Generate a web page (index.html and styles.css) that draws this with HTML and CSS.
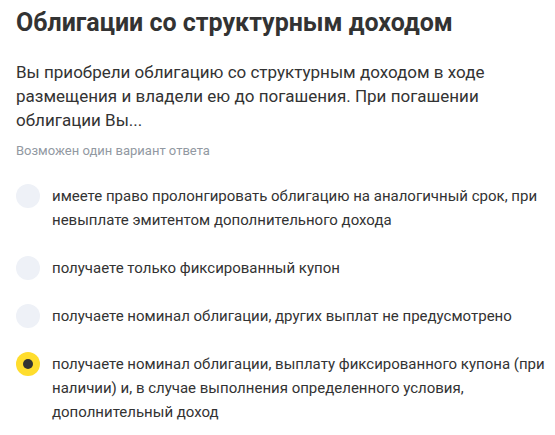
FILE: index.html
```html
<!DOCTYPE html>
<html lang="ru">
<head>
    <meta charset="UTF-8">
    <meta name="viewport" content="width=device-width, initial-scale=1.0">
    <title>Облигации со структурным доходом</title>
    <link rel="stylesheet" href="styles.css">
</head>
<body>
    <h1 class="title">Облигации со структурным доходом</h1>
    <p class="question">Вы приобрели облигацию со структурным доходом в ходе размещения и владели ею до погашения. При погашении облигации Вы...</p>
    <div class="hint">Возможен один вариант ответа</div>

    <div class="options">
        <label class="option">
            <span class="radio"></span>
            <span class="option-text">имеете право пролонгировать облигацию на аналогичный срок, при невыплате эмитентом дополнительного дохода</span>
        </label>
        <label class="option">
            <span class="radio"></span>
            <span class="option-text">получаете только фиксированный купон</span>
        </label>
        <label class="option">
            <span class="radio"></span>
            <span class="option-text">получаете номинал облигации, других выплат не предусмотрено</span>
        </label>
        <label class="option checked">
            <span class="radio"></span>
            <span class="option-text">получаете номинал облигации, выплату фиксированного купона (при наличии) и, в случае выполнения определенного условия, дополнительный доход</span>
        </label>
    </div>
</body>
</html>
```

FILE: styles.css
```css
body { margin: 0; padding: 0 2px 0 16px; font-family: Roboto, "Noto Sans", sans-serif; color: #333; background: #fff; }
.title { margin: 5px 0 0; font-size: 25px; line-height: 36px; font-weight: 700; }
.question { margin: 19px 0 0; padding-right: 10px; font-size: 17px; line-height: 24px; }
.hint { margin-top: 11px; font-size: 13px; line-height: 16px; color: #9299a2; }
.options { margin-top: 25px; display: flex; flex-direction: column; gap: 24px; }
.option { display: flex; align-items: flex-start; gap: 12px; cursor: pointer; }
.radio {
    flex: none;
    width: 24px;
    height: 24px;
    border-radius: 50%;
    background: #eef1f7;
    display: flex;
    align-items: center;
    justify-content: center;
}
.checked .radio { background: #ffdd2d; }
.checked .radio::after { content: ""; width: 10px; height: 10px; border-radius: 50%; background: #333; }
.option-text { font-size: 15px; line-height: 24px; }
```
